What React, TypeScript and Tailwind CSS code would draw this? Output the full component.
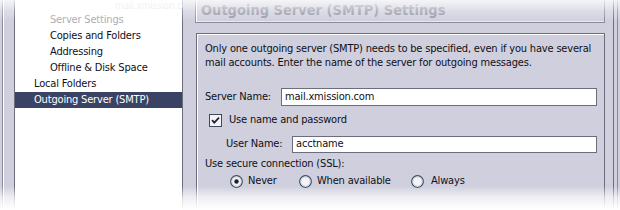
import React from "react";

const font = { fontFamily: '"DejaVu Sans Condensed", "DejaVu Sans", sans-serif', fontStretch: "condensed" as const };

function Radio({ checked }: { checked?: boolean }) {
  return (
    <svg width="13" height="13" viewBox="0 0 13 13" className="shrink-0">
      <circle cx="6.5" cy="6.5" r="5.8" fill="#f4f4f8" stroke="#3c4a5c" strokeWidth="1.2" />
      <circle cx="6.5" cy="6.5" r="4.6" fill="none" stroke="#c8ccd8" strokeWidth="0.8" />
      {checked && <circle cx="6.5" cy="6.5" r="2.2" fill="#1c2030" />}
    </svg>
  );
}

function Checkbox() {
  return (
    <svg width="13" height="13" viewBox="0 0 13 13" className="shrink-0">
      <rect x="0.5" y="0.5" width="12" height="12" fill="#f4f4f8" stroke="#3c4a5c" />
      <path d="M3 6.2 L5.3 8.6 L10 3.6" fill="none" stroke="#1c2436" strokeWidth="1.8" />
    </svg>
  );
}

export default function App() {
  return (
    <div className="relative w-[620px] h-[210px] overflow-hidden bg-white text-[11px] tracking-[-0.18px] text-[#101018]" style={font}>
      <div className="flex h-full">
        {/* left strip */}
        <div className="w-[15px] h-full bg-[#cfcfdd] flex">
          <div className="w-[2px]" />
          <div className="w-[1px] bg-[#8a8a9c]" />
          <div className="w-[1px] bg-white" />
          <div className="flex-1" />
          <div className="w-[1px] bg-[#6c6c7c]" />
        </div>
        {/* tree */}
        <div className="w-[168px] h-full bg-white border-r border-[#6c6c7c] flex flex-col">
          <div className="h-[12px] flex items-center pl-[100px] text-[#e2e2e8] text-[10px] leading-[12px]">mail.xmission.com</div>
          <div className="h-[16px] flex items-center pl-[35px] text-[#a8a8b4]">Server Settings</div>
          <div className="h-[16px] flex items-center pl-[35px]">Copies and Folders</div>
          <div className="h-[16px] flex items-center pl-[35px]">Addressing</div>
          <div className="h-[16px] flex items-center pl-[35px]">Offline &amp; Disk Space</div>
          <div className="h-[16px] flex items-center pl-[19px]">Local Folders</div>
          <div className="h-[16px] flex items-center pl-[19px] bg-[#3a4364] text-white">Outgoing Server (SMTP)</div>
        </div>
        {/* gap */}
        <div className="w-[12px] h-full bg-[#cfcfdd]" />
        {/* right panel */}
        <div className="w-[410px] h-full bg-[#cfcfdd] flex flex-col">
          <div className="h-[23px] border border-t-0 border-[#8a8a9c] shadow-[inset_1px_0_0_#ffffff,inset_0_-1px_0_#e8e8f0] flex items-center pl-[5px] text-[14.5px] tracking-normal font-bold text-[#9494a4]">
            Outgoing Server (SMTP) Settings
          </div>
          <div className="mt-[10px] ml-[1px] flex-1 border border-b-0 border-[#6c6c7c] shadow-[inset_1px_1px_0_#ffffff] pl-[8px] pr-[7px] pt-[8px]">
            <div className="leading-[14px] whitespace-nowrap">
              Only one outgoing server (SMTP) needs to be specified, even if you have several
              <br />
              mail accounts. Enter the name of the server for outgoing messages.
            </div>
            <div className="mt-[18px] flex items-center h-[18px]">
              <div className="w-[76px] shrink-0">Server Name:</div>
              <div className="flex-1 h-[18px] bg-white border border-[#6c6c7c] flex items-center pl-[3px]">mail.xmission.com</div>
            </div>
            <div className="mt-[8px] flex items-center h-[13px] pl-[4px] gap-[7px]">
              <Checkbox />
              <span>Use name and password</span>
            </div>
            <div className="mt-[9px] flex items-center h-[17px]">
              <div className="w-[87px] shrink-0 pl-[21px]">User Name:</div>
              <div className="flex-1 h-[17px] bg-white border border-[#6c6c7c] flex items-center pl-[3px]">acctname</div>
            </div>
            <div className="mt-[4px] h-[14px] flex items-center">Use secure connection (SSL):</div>
            <div className="mt-[3px] h-[14px] flex items-center pl-[25px]">
              <div className="flex items-center gap-[5px] w-[69px]"><Radio checked /><span>Never</span></div>
              <div className="flex items-center gap-[5px] w-[112px]"><Radio /><span>When available</span></div>
              <div className="flex items-center gap-[7px]"><Radio /><span>Always</span></div>
            </div>
          </div>
        </div>
        {/* right edge */}
        <div className="flex-1 h-full bg-[#cfcfdd] flex">
          <div className="w-[8px]" />
          <div className="w-[1px] bg-[#6c6c7c]" />
          <div className="w-[3px]" />
          <div className="w-[1px] bg-[#8a8a9c]" />
          <div className="flex-1" />
        </div>
      </div>
      {/* torn edge fades */}
      <div className="absolute left-0 top-0 w-full h-[22px] bg-gradient-to-b from-white/80 via-white/30 to-transparent pointer-events-none" />
      <div className="absolute left-0 bottom-0 w-full h-[24px] bg-gradient-to-b from-transparent via-white/70 to-white pointer-events-none" />
    </div>
  );
}
